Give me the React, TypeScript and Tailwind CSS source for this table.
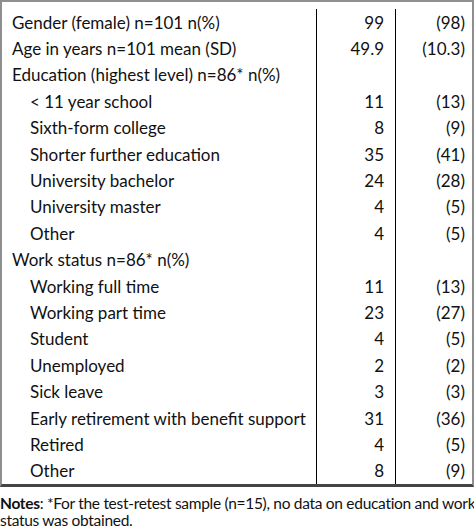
const rows: { label: string; indent?: boolean; n?: string; pct?: string }[] = [
  { label: "Gender (female) n=101 n(%)", n: "99", pct: "(98)" },
  { label: "Age in years n=101 mean (SD)", n: "49.9", pct: "(10.3)" },
  { label: "Education (highest level) n=86* n(%)" },
  { label: "< 11 year school", indent: true, n: "11", pct: "(13)" },
  { label: "Sixth-form college", indent: true, n: "8", pct: "(9)" },
  { label: "Shorter further education", indent: true, n: "35", pct: "(41)" },
  { label: "University bachelor", indent: true, n: "24", pct: "(28)" },
  { label: "University master", indent: true, n: "4", pct: "(5)" },
  { label: "Other", indent: true, n: "4", pct: "(5)" },
  { label: "Work status n=86* n(%)" },
  { label: "Working full time", indent: true, n: "11", pct: "(13)" },
  { label: "Working part time", indent: true, n: "23", pct: "(27)" },
  { label: "Student", indent: true, n: "4", pct: "(5)" },
  { label: "Unemployed", indent: true, n: "2", pct: "(2)" },
  { label: "Sick leave", indent: true, n: "3", pct: "(3)" },
  { label: "Early retirement with benefit support", indent: true, n: "31", pct: "(36)" },
  { label: "Retired", indent: true, n: "4", pct: "(5)" },
  { label: "Other", indent: true, n: "8", pct: "(9)" },
];

export default function App() {
  return (
    <div className="h-[527px] w-[474px] overflow-hidden bg-white text-[#111] font-['Lato',sans-serif]">
      <div className="border-x-2 border-t-2 border-b-[3px] border-x-[#8f8f8f] border-t-[#8f8f8f] border-b-[#444]">
        {rows.map((r, i) => (
          <div
            key={i}
            className={`grid grid-cols-[314px_79px_1fr] text-[17px] leading-none ${i === 0 ? "h-[33.4px] pt-[7px]" : "h-[26.4px]"}`}
          >
            <div className={`flex items-center whitespace-nowrap ${r.indent ? "pl-[28px]" : "pl-[10px]"}`}>{r.label}</div>
            <div className="flex items-center justify-end border-l-[1.5px] border-black pr-[11px]">{r.n}</div>
            <div className="flex items-center justify-end border-l-[1.5px] border-black pr-[7px]">{r.pct}</div>
          </div>
        ))}
      </div>
      <p className="pt-[8px] text-[15.5px] leading-[17px] tracking-[-0.3px]">
        <span className="whitespace-nowrap">
          <span className="font-bold">Notes</span>: *For the test-retest sample (n=15), no data on education and work
        </span>
        <br />
        status was obtained.
      </p>
    </div>
  );
}
